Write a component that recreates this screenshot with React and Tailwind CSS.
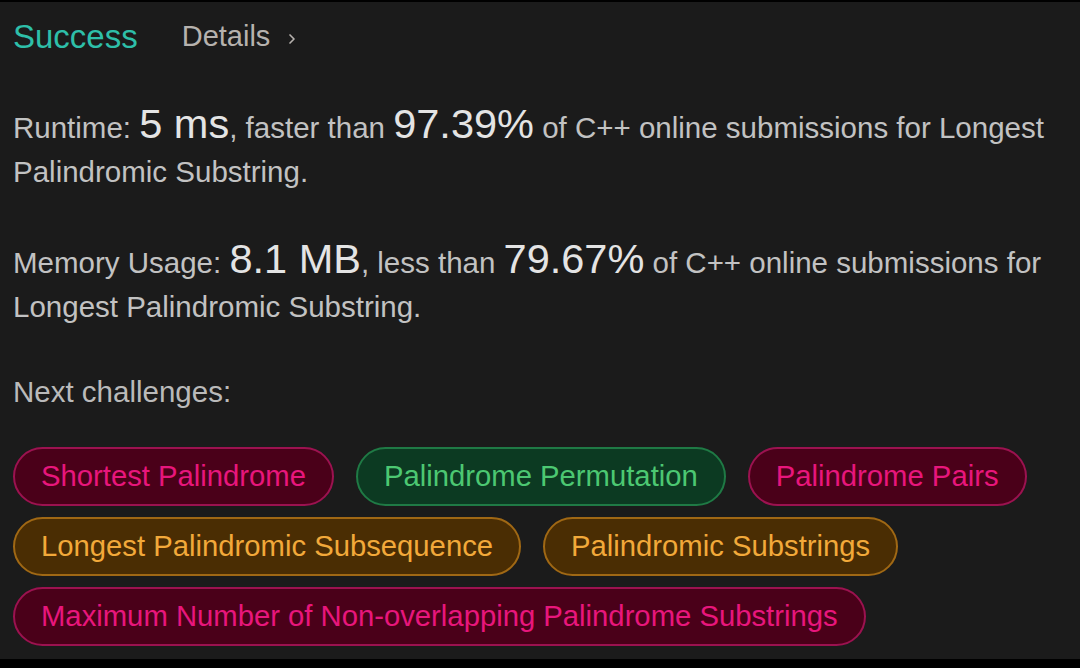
import { ChevronRight } from 'lucide-react';

const challenges = [
  { label: 'Shortest Palindrome', tone: 'hard' },
  { label: 'Palindrome Permutation', tone: 'easy' },
  { label: 'Palindrome Pairs', tone: 'hard' },
  { label: 'Longest Palindromic Subsequence', tone: 'medium' },
  { label: 'Palindromic Substrings', tone: 'medium' },
  { label: 'Maximum Number of Non-overlapping Palindrome Substrings', tone: 'hard' },
];

const toneClass = {
  hard: 'bg-[#4a0019] border-[#9c1250] text-[#e8167c]',
  easy: 'bg-[#0c3a22] border-[#1f7a45] text-[#4cc872]',
  medium: 'bg-[#4a2d03] border-[#a06814] text-[#f2a93a]',
};

export default function App() {
  return (
    <div className="w-[1080px] h-[668px] flex flex-col bg-black overflow-hidden font-['Liberation_Sans',Arial,sans-serif]">
      <div className="mt-[2px] flex-1 bg-[#1b1b1b] px-[13px]">
        {/* Tabs */}
        <div className="h-[70px] flex items-center">
          <span className="text-[33px] text-[#2ebfa9]">Success</span>
          <span className="ml-[44px] text-[29px] text-[#b6b2ae]">Details</span>
          <ChevronRight className="ml-[14px] mt-[3px] w-[16px] h-[16px] text-[#b6b2ae]" strokeWidth={2.5} />
        </div>

        {/* Stats */}
        <p className="mt-[30px] text-[29.5px] leading-[44px] text-[#c2c2c2]">
          Runtime: <span className="text-[41.5px] text-[#e4e4e4]">5 ms</span>, faster than{' '}
          <span className="text-[41.5px] text-[#e4e4e4]">97.39%</span> of C++ online submissions for Longest
          Palindromic Substring.
        </p>
        <p className="mt-[43px] text-[29.5px] leading-[44px] text-[#c2c2c2]">
          Memory Usage: <span className="text-[41.5px] text-[#e4e4e4]">8.1 MB</span>, less than{' '}
          <span className="text-[41.5px] text-[#e4e4e4]">79.67%</span> of C++ online submissions for Longest
          Palindromic Substring.
        </p>

        <p className="mt-[41px] text-[29.5px] leading-[44px] text-[#bababa]">Next challenges:</p>

        {/* Challenge chips */}
        <div className="mt-[33px] flex flex-wrap gap-x-[22px] gap-y-[11px]">
          {challenges.map((c) => (
            <span
              key={c.label}
              className={`h-[59px] px-[26px] flex items-center rounded-full border-2 text-[29.25px] ${toneClass[c.tone]}`}
            >
              {c.label}
            </span>
          ))}
        </div>
      </div>
      <div className="h-[9px] bg-black" />
    </div>
  );
}
